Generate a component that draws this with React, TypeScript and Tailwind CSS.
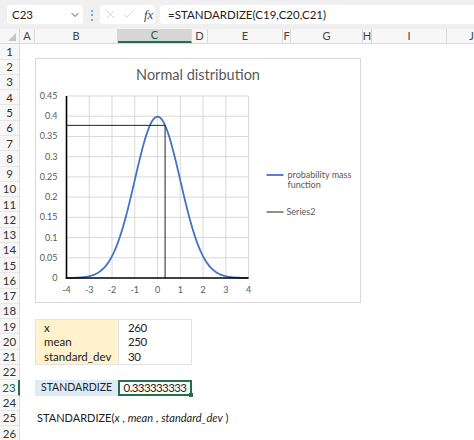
import React from 'react'
import { ChevronDown, X, Check } from 'lucide-react'

const COLS = [
  { id: 'A', cls: 'w-[15px]' },
  { id: 'B', cls: 'w-[83px]' },
  { id: 'C', cls: 'w-[74px]' },
  { id: 'D', cls: 'w-[16px]' },
  { id: 'E', cls: 'w-[75px]' },
  { id: 'F', cls: 'w-[8px]' },
  { id: 'G', cls: 'w-[72px]' },
  { id: 'H', cls: 'w-[9px]' },
  { id: 'I', cls: 'w-[75px]' },
  { id: 'J', cls: 'w-[50px]' },
]

const ROWS = Array.from({ length: 26 }, (_, i) => i + 1)

// chart helpers, page coordinates
const px = (x: number) => 66 + (x + 4) * 22.75
const py = (v: number) => 278 - (v / 0.45) * 182
const pdf = (x: number) => Math.exp((-x * x) / 2) / Math.sqrt(2 * Math.PI)

function curvePath() {
  const pts: string[] = []
  for (let i = 0; i <= 160; i++) {
    const x = -4 + i * 0.05
    pts.push(`${i === 0 ? 'M' : 'L'}${px(x).toFixed(2)},${py(pdf(x)).toFixed(2)}`)
  }
  return pts.join(' ')
}

function Chart() {
  const z = 1 / 3
  const yTicks = [0, 0.05, 0.1, 0.15, 0.2, 0.25, 0.3, 0.35, 0.4, 0.45]
  const xTicks = [-4, -3, -2, -1, 0, 1, 2, 3, 4]
  const labelY = (v: number) => (v === 0 ? '0' : String(Number(v.toFixed(2))))
  return (
    <div className="absolute left-[34.5px] top-[58px] w-[326px] h-[245px] bg-white border border-[#d9d9d9]">
      <svg width="326" height="245" className="block -ml-px -mt-px font-[Lato,sans-serif]">
        <g transform="translate(-34.5,-58)">
          <text x="197.5" y="80" textAnchor="middle" fontSize="14.5" fill="#595959">
            Normal distribution
          </text>
          {yTicks.slice(1).map((v) => (
            <line key={v} x1={66} x2={248} y1={py(v)} y2={py(v)} stroke="#d9d9d9" strokeWidth="1" />
          ))}
          {xTicks.slice(1).map((x) => (
            <line key={x} x1={px(x)} x2={px(x)} y1={96} y2={278} stroke="#d9d9d9" strokeWidth="1" />
          ))}
          {yTicks.map((v) => (
            <text key={v} x="57" y={py(v) + 3} textAnchor="end" fontSize="9" fill="#595959">
              {labelY(v)}
            </text>
          ))}
          {xTicks.map((x) => (
            <text key={x} x={px(x)} y="293" textAnchor="middle" fontSize="9" fill="#595959">
              {x}
            </text>
          ))}
          <path d={curvePath()} fill="none" stroke="#4472c4" strokeWidth="1.8" />
          <path d={`M66,${py(pdf(z))} H${px(z)} V278`} fill="none" stroke="#222" strokeWidth="1" />
          <line x1="66" x2="66" y1="96" y2="278.8" stroke="#000" strokeWidth="1.6" />
          <line x1="65.2" x2="248" y1="278" y2="278" stroke="#000" strokeWidth="1.6" />
          <line x1="266" x2="283" y1="175" y2="175" stroke="#4472c4" strokeWidth="1.8" />
          <text x="287" y="178" fontSize="9" fill="#595959">probability mass</text>
          <text x="287" y="188" fontSize="9" fill="#595959">function</text>
          <line x1="266" x2="283" y1="212" y2="212" stroke="#222" strokeWidth="1" />
          <text x="286" y="215" fontSize="9" fill="#595959">Series2</text>
        </g>
      </svg>
    </div>
  )
}

function RowCells({ r }: { r: number }) {
  if (r >= 19 && r <= 21) {
    const data: Record<number, [string, string]> = {
      19: ['x', '260'],
      20: ['mean', '250'],
      21: ['standard_dev', '30'],
    }
    const [k, v] = data[r]
    return (
      <>
        <div className="w-[15px] shrink-0" />
        <div className={`w-[83px] shrink-0 h-full bg-[#fff2cc] border-l border-[#e3e3e3] pl-[8px] flex items-center ${r === 19 ? 'border-t' : ''} ${r === 21 ? 'border-b' : ''}`}>
          {k}
        </div>
        <div className={`w-[74px] shrink-0 h-full border-l border-r border-[#e3e3e3] pl-[9px] flex items-center tracking-[-0.4px] ${r === 19 ? 'border-t' : ''} ${r === 21 ? 'border-b' : ''}`}>
          {v}
        </div>
      </>
    )
  }
  if (r === 23) {
    return (
      <>
        <div className="w-[15px] shrink-0" />
        <div className="w-[83px] shrink-0 h-full bg-[#ddebf7] flex items-center justify-center text-[10.5px]">STANDARDIZE</div>
        <div className="relative w-[74px] shrink-0 h-full border-2 border-[#217346] flex items-center justify-center tracking-[-0.6px]">
          0.333333333
          <span className="absolute -right-[3px] -bottom-[3px] w-[4px] h-[4px] bg-[#217346]" />
        </div>
      </>
    )
  }
  if (r === 25) {
    return (
      <>
        <div className="w-[17px] shrink-0" />
        <div className="whitespace-nowrap flex items-center text-[11px]">
          STANDARDIZE(<i>x</i>&nbsp;,&nbsp;<i>mean</i>&nbsp;,&nbsp;<i>standard_dev</i>&nbsp;)
        </div>
      </>
    )
  }
  return null
}

export default function App() {
  return (
    <div className="relative w-[474px] h-[440px] overflow-hidden bg-white font-[Lato,sans-serif] text-[#222]">
      {/* Formula bar */}
      <div className="h-[29px] bg-[#f0f0f0] flex items-center pl-[7px]">
        <div className="w-[76px] h-[19px] bg-white rounded-[4px] flex items-center justify-between pl-[5px] pr-[2px] text-[11.5px]">
          C23
          <ChevronDown size={12} strokeWidth={2} className="text-[#555]" />
        </div>
        <div className="w-[17px] text-center text-[12px] text-[#777] leading-none">⋮</div>
        <div className="w-[55px] h-[19px] bg-white rounded-[4px] flex items-center pl-[4px] gap-[5px]">
          <X size={13} strokeWidth={1.2} className="text-[#bdbdbd]" />
          <Check size={13} strokeWidth={1.2} className="text-[#bdbdbd]" />
          <span className="ml-[4px] font-['Liberation_Serif',serif] italic text-[13px] text-[#444]">fx</span>
        </div>
        <div className="flex-1 ml-[5px] h-[19px] bg-white rounded-l-[4px] flex items-center pl-[8px] text-[11.5px]">
          =STANDARDIZE(C19,C20,C21)
        </div>
      </div>

      {/* Column headers */}
      <div className="h-[15.4px] flex bg-[#f7f7f7] border-b border-[#dadada] text-[11px] text-[#444]">
        <div className="w-[20px] shrink-0 relative border-r border-[#dadada]">
          <span className="absolute right-[3px] bottom-[2px] w-0 h-0 border-l-[8px] border-l-transparent border-b-[8px] border-b-[#c4c4c4]" />
        </div>
        {COLS.map((c) => (
          <div
            key={c.id}
            className={`${c.cls} shrink-0 flex items-center justify-center border-r border-[#dadada] ${
              c.id === 'C' ? 'bg-[#d6d6d6] border-b-2 border-b-[#217346] text-[#1d5e3a]' : ''
            }`}
          >
            {c.id}
          </div>
        ))}
      </div>

      {/* Grid rows */}
      <div className="text-[11.5px]">
        {ROWS.map((r) => (
          <div key={r} className="h-[15.28px] flex">
            <div
              className={`w-[20px] shrink-0 h-full flex items-center justify-center bg-[#f7f7f7] border-b border-[#e6e6e6] text-[11.5px] ${
                r === 23 ? 'bg-[#d6d6d6] border-r-2 border-r-[#217346] text-[#1d5e3a]' : 'border-r border-r-[#dadada] text-[#333]'
              }`}
            >
              {r}
            </div>
            <RowCells r={r} />
          </div>
        ))}
      </div>

      <Chart />
    </div>
  )
}
